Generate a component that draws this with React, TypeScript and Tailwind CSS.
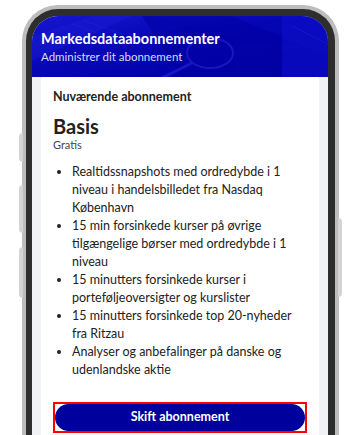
import React from "react";

const features = [
  "Realtidssnapshots med ordredybde i 1 niveau i handelsbilledet fra Nasdaq København",
  "15 min forsinkede kurser på øvrige tilgængelige børser med ordredybde i 1 niveau",
  "15 minutters forsinkede kurser i porteføljeoversigter og kurslister",
  "15 minutters forsinkede top 20-nyheder fra Ritzau",
  "Analyser og anbefalinger på danske og udenlandske aktie",
];

function HeaderArt() {
  return (
    <svg
      className="absolute inset-0 h-full w-full"
      viewBox="0 0 296 61"
      preserveAspectRatio="none"
      aria-hidden
    >
      <defs>
        <linearGradient id="hdr" x1="0" y1="0" x2="1" y2="1">
          <stop offset="0" stopColor="#1616cf" />
          <stop offset="0.45" stopColor="#0606b4" />
          <stop offset="1" stopColor="#0000a2" />
        </linearGradient>
      </defs>
      <rect width="296" height="61" fill="url(#hdr)" />
      <polygon points="110,0 200,0 296,40 296,61 150,61" fill="#0000a0" opacity="0.5" />
      <polygon points="0,20 60,0 100,0 0,45" fill="#2020d8" opacity="0.35" />
      <rect x="250" y="0" width="46" height="61" fill="#1010d0" opacity="0.55" />
      <g stroke="#2626d6" fill="none" opacity="0.6">
        <ellipse cx="178" cy="37" rx="23" ry="15" strokeWidth="2" />
        <line x1="160" y1="47" x2="128" y2="63" strokeWidth="3" />
      </g>
      <g stroke="#2a2ad8" strokeWidth="0.6" opacity="0.6">
        <line x1="40" y1="8" x2="80" y2="22" />
        <line x1="50" y1="4" x2="90" y2="18" />
        <line x1="260" y1="10" x2="296" y2="28" />
      </g>
    </svg>
  );
}

export default function App() {
  return (
    <div
      className="h-[435px] w-[360px] overflow-hidden bg-white pt-[5px]"
      style={{ fontFamily: "Lato, 'Open Sans', sans-serif" }}
    >
      <div className="relative ml-[22px] w-[317px]">
        <span className="absolute left-[-3px] top-[128px] h-[29px] w-[4px] rounded-l bg-[#d4d4d4]" />
        <span className="absolute left-[-3px] top-[180px] h-[48px] w-[4px] rounded-l bg-[#d4d4d4]" />
        <span className="absolute left-[-3px] top-[242px] h-[51px] w-[4px] rounded-l bg-[#d4d4d4]" />
        <span className="absolute right-[-3px] top-[213px] h-[79px] w-[4px] rounded-r bg-[#d4d4d4]" />
        <div className="h-[480px] rounded-[36px] bg-[#bdbdbd] p-[4px]">
          <div className="h-full rounded-[32px] bg-[#2e2e2e] px-[6px] pb-[6px] pt-[7px] pr-[7px]">
            <div className="flex h-full flex-col overflow-hidden rounded-[26px] bg-[#f0f2f5]">
              <div className="relative h-[61px] shrink-0 px-[9px] pt-[13px]">
                <HeaderArt />
                <div className="relative text-[14.5px] font-bold leading-[19px] text-white">
                  Markedsdataabonnementer
                </div>
                <div className="relative mt-[1px] text-[11.5px] leading-[16px] text-[#dcdcf0]">
                  Administrer dit abonnement
                </div>
              </div>
              <div className="mx-[9px] flex-1 rounded-t-[2px] bg-white px-3 pt-[12px] text-[#222]">
                <div className="text-[12.5px] font-bold leading-[16px]">Nuværende abonnement</div>
                <div className="mt-[9px] text-[20px] font-bold leading-[24px]">Basis</div>
                <div className="text-[11px] leading-[14px] text-[#444]">Gratis</div>
                <ul className="mt-[11px] list-disc pl-[19px] text-[12.5px] leading-[18px]">
                  {features.map((f) => (
                    <li key={f}>{f}</li>
                  ))}
                </ul>
                <div className="mt-[23px] border-2 border-[#ff0000]">
                  <button
                    type="button"
                    className="flex h-[27px] w-full items-center justify-center rounded-full bg-[#00009c] text-[12.5px] font-bold text-white"
                  >
                    Skift abonnement
                  </button>
                </div>
              </div>
            </div>
          </div>
        </div>
      </div>
    </div>
  );
}
